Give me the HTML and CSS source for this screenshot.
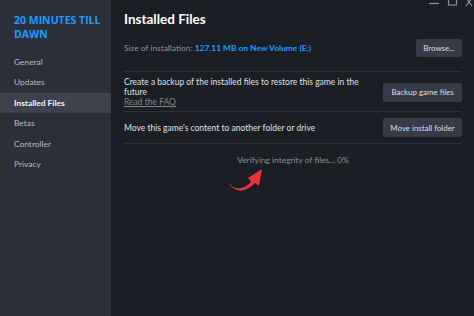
FILE: index.html
```html
<!DOCTYPE html>
<html>
<head>
<meta charset="utf-8">
<link rel="stylesheet" href="styles.css">
</head>
<body>
<div class="app">
  <aside class="sidebar">
    <div class="game-title">20 MINUTES TILL DAWN</div>
    <nav class="nav">
      <div class="nav-item">General</div>
      <div class="nav-item">Updates</div>
      <div class="nav-item active">Installed Files</div>
      <div class="nav-item">Betas</div>
      <div class="nav-item">Controller</div>
      <div class="nav-item">Privacy</div>
    </nav>
  </aside>
  <main class="content">
    <h1 class="heading">Installed Files</h1>
    <div class="row row-size">
      <div class="row-text muted">Size of installation: <span class="accent">127.11 MB on New Volume (E:)</span></div>
      <button class="btn">Browse...</button>
    </div>
    <div class="row row-backup">
      <div class="row-text">Create a backup of the installed files to restore this game in the<br>future<br><span class="link">Read the FAQ</span></div>
      <button class="btn">Backup game files</button>
    </div>
    <div class="row row-move">
      <div class="row-text">Move this game's content to another folder or drive</div>
      <button class="btn">Move install folder</button>
    </div>
    <div class="status">Verifying integrity of files... 0%</div>
    <div class="arrow-wrap">
      <svg class="arrow" width="37" height="27" viewBox="0 0 37 27">
        <path d="M1 15 C6 22 14 25 24 15 L21 11 L35 2 L32 19 L28 16 C18 27 6 25 1 15 Z" fill="#ec3039"/>
      </svg>
    </div>
  </main>
  <div class="win-controls">
    <svg width="60" height="10" viewBox="0 0 60 10">
      <line x1="15" y1="3.5" x2="25" y2="3.5" stroke="#8a8f98" stroke-width="1.2"/>
      <rect x="34.5" y="-3" width="8" height="8" fill="none" stroke="#8a8f98" stroke-width="1.2"/>
      <path d="M52 -2 L58 6 M58 -2 L52 6" stroke="#8a8f98" stroke-width="1.2"/>
    </svg>
  </div>
</div>
</body>
</html>
```
FILE: styles.css
```css
* { box-sizing: border-box; }
html, body { margin: 0; padding: 0; }
body {
  width: 474px;
  height: 316px;
  overflow: hidden;
  background: #1b1e25;
  font-family: Lato, "Open Sans", sans-serif;
}
.app {
  position: relative;
  display: flex;
  width: 474px;
  height: 316px;
}
.sidebar {
  width: 111px;
  flex: none;
  background: #2b2f38;
  padding-top: 13px;
}
.game-title {
  padding-left: 14px;
  padding-right: 6px;
  color: #1a9cff;
  font-family: "Open Sans", sans-serif;
  font-weight: 700;
  font-size: 10.5px;
  line-height: 14px;
}
.nav {
  margin-top: 11px;
  display: flex;
  flex-direction: column;
}
.nav-item {
  height: 20.4px;
  line-height: 20.4px;
  padding-left: 14px;
  font-size: 8.4px;
  color: #b7bbc1;
}
.nav-item.active {
  background: #3d424d;
  color: #f2f3f5;
  font-weight: 700;
}
.content {
  flex: 1;
  display: flex;
  flex-direction: column;
  padding: 9px 12px 0 13px;
}
.heading {
  margin: 0;
  font-size: 13.5px;
  line-height: 20px;
  font-weight: 700;
  color: #ffffff;
}
.row {
  display: flex;
  align-items: center;
  justify-content: space-between;
  border-bottom: 1px solid #2c3039;
}
.row-size {
  margin-top: 10px;
  padding-bottom: 14px;
}
.row-backup {
  padding: 5px 0 4px;
}
.row-move {
  padding: 6px 0 6px;
}
.row-text {
  font-size: 8.5px;
  line-height: 10px;
  color: #dfe1e4;
  white-space: nowrap;
  min-width: 0;
}
.row-size .row-text { font-size: 8.4px; }
.muted { color: #8b9098; }
.accent { color: #1a9cff; font-weight: 700; }
.link {
  color: #7e848d;
  text-decoration: underline;
}
.btn {
  font-family: inherit;
  font-size: 7.9px;
  color: #dcdee1;
  background: #363b45;
  border: none;
  border-radius: 2px;
  height: 19px;
  padding: 0;
  flex: none;
}
.row-size .btn { height: 18px; width: 46px; }
.row-backup .btn, .row-move .btn { width: 79px; }
.status {
  margin-top: 11px;
  text-align: center;
  font-size: 8.4px;
  line-height: 10px;
  color: #8a8f97;
}
.arrow-wrap {
  padding-left: 103px;
  margin-top: 2px;
}
.arrow { display: block; }
.win-controls {
  position: absolute;
  top: 0;
  right: 0;
  width: 60px;
  height: 10px;
}
.win-controls svg { display: block; }
```
